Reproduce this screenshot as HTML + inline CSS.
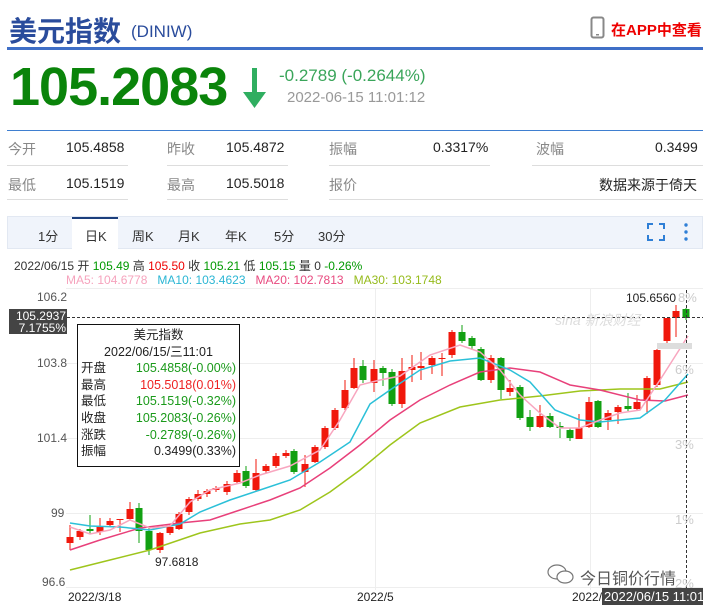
<!DOCTYPE html>
<html><head><meta charset="utf-8"><style>
*{margin:0;padding:0;box-sizing:border-box}
body{width:703px;height:605px;overflow:hidden;background:#fff;font-family:"Liberation Sans","Noto Sans CJK SC",sans-serif;position:relative}
.a{position:absolute;white-space:nowrap}
.lb{color:#888;font-size:14px}
.v{color:#222;font-size:14px}
.ul{position:absolute;height:1px;background:#ddd}
</style></head><body>
<div class="a" style="left:9px;top:10px;font-size:28px;font-weight:bold;color:#2a4c9c">美元指数</div>
<div class="a" style="left:131px;top:22px;font-size:17px;color:#2a4c9c">(DINIW)</div>
<svg class="a" style="left:590px;top:16px" width="16" height="24"><rect x="1.5" y="1.5" width="12" height="20" rx="2" fill="none" stroke="#888" stroke-width="2"/><rect x="6" y="18" width="3" height="1.5" fill="#888"/></svg>
<div class="a" style="left:611px;top:19px;font-size:15px;color:#e00;font-weight:bold">在APP中查看</div>
<div class="a" style="left:7px;top:47px;width:696px;height:3px;background:#3f6fc7"></div>
<div class="a" style="left:10px;top:56px;font-size:54px;font-weight:bold;color:#0a840a;letter-spacing:-1px">105.2083</div>
<svg class="a" style="left:242px;top:68px" width="26" height="42"><rect x="10" y="0" width="5" height="28" fill="#2fae60"/><polygon points="1,24 24,24 12.5,40" fill="#2fae60"/></svg>
<div class="a" style="left:279px;top:66px;font-size:17px;color:#3aa55a">-0.2789 (-0.2644%)</div>
<div class="a" style="left:287px;top:89px;font-size:15px;color:#999">2022-06-15 11:01:12</div>
<div class="a" style="left:7px;top:130px;width:696px;height:1px;background:#3f7fd0"></div>
<div class="a lb" style="left:8px;top:139px">今开</div><div class="a v" style="left:66px;top:139px">105.4858</div>
<div class="a lb" style="left:167px;top:139px">昨收</div><div class="a v" style="left:226px;top:139px">105.4872</div>
<div class="a lb" style="left:329px;top:139px">振幅</div><div class="a v" style="left:433px;top:139px">0.3317%</div>
<div class="a lb" style="left:536px;top:139px">波幅</div><div class="a v" style="left:655px;top:139px">0.3499</div>
<div class="ul" style="left:7px;top:165px;width:121px"></div>
<div class="ul" style="left:167px;top:165px;width:121px"></div>
<div class="ul" style="left:329px;top:165px;width:161px"></div>
<div class="ul" style="left:532px;top:165px;width:171px"></div>
<div class="a lb" style="left:8px;top:175px">最低</div><div class="a v" style="left:66px;top:175px">105.1519</div>
<div class="a lb" style="left:167px;top:175px">最高</div><div class="a v" style="left:226px;top:175px">105.5018</div>
<div class="a lb" style="left:329px;top:175px">报价</div><div class="a v" style="left:599px;top:175px">数据来源于倚天</div>
<div class="ul" style="left:7px;top:199px;width:121px"></div>
<div class="ul" style="left:167px;top:199px;width:121px"></div>
<div class="ul" style="left:329px;top:199px;width:374px"></div>

<div class="a" style="left:7px;top:216px;width:696px;height:33px;background:#f0f4fb;border:1px solid #e2e8f2"></div>
<div class="a" style="left:72px;top:217px;width:46px;height:32px;background:#fff;border-top:2px solid #1c3f7d"></div>
<div class="a" style="top:226px;left:38px;font-size:13px;color:#333">1分</div>
<div class="a" style="top:226px;left:85px;font-size:13px;color:#333">日K</div>
<div class="a" style="top:226px;left:132px;font-size:13px;color:#333">周K</div>
<div class="a" style="top:226px;left:178px;font-size:13px;color:#333">月K</div>
<div class="a" style="top:226px;left:225px;font-size:13px;color:#333">年K</div>
<div class="a" style="top:226px;left:274px;font-size:13px;color:#333">5分</div>
<div class="a" style="top:226px;left:318px;font-size:13px;color:#333">30分</div>
<svg class="a" style="left:647px;top:223px" width="18" height="18" fill="none" stroke="#2f7fd6" stroke-width="2"><path d="M1 6V1h5M12 1h5v5M17 12v5h-5M6 17H1v-5"/></svg>
<svg class="a" style="left:683px;top:222px" width="6" height="20" fill="#2f7fd6"><circle cx="3" cy="3" r="1.7"/><circle cx="3" cy="10" r="1.7"/><circle cx="3" cy="17" r="1.7"/></svg>

<div class="a" style="left:14px;top:257px;font-size:12px;color:#333">2022/06/15 开 <span style="color:#090">105.49</span> 高 <span style="color:#e00">105.50</span> 收 <span style="color:#090">105.21</span> 低 <span style="color:#090">105.15</span> 量 0 <span style="color:#090">-0.26%</span></div>
<div class="a" style="left:66px;top:273px;font-size:12px"><span style="color:#f6a3bd">MA5: 104.6778</span>&nbsp;&nbsp;&nbsp;<span style="color:#2bb6d4">MA10: 103.4623</span>&nbsp;&nbsp;&nbsp;<span style="color:#e84a7f">MA20: 102.7813</span>&nbsp;&nbsp;&nbsp;<span style="color:#96bb1c">MA30: 103.1748</span></div>

<svg class="a" style="left:0;top:0" width="703" height="605">
<g stroke="#eee" stroke-width="1">
<line x1="66" y1="288.5" x2="703" y2="288.5"/>
<line x1="66" y1="363.5" x2="703" y2="363.5"/>
<line x1="66" y1="438.5" x2="703" y2="438.5"/>
<line x1="66" y1="513.5" x2="703" y2="513.5"/>
<line x1="66" y1="587.5" x2="703" y2="587.5"/>
<line x1="375.5" y1="288" x2="375.5" y2="590"/>
<line x1="590.5" y1="288" x2="590.5" y2="590"/>
</g>
<g id="c"></g>
<g fill="none" stroke-width="1.5">
<polyline stroke="#9ec51c" points="70,570 110,560 150,550 200,533 240,524 270,520 300,510 330,492 360,470 390,445 420,423 460,407 500,400 540,396 580,391 620,389 660,389 688,382"/>
<polyline stroke="#e8407a" points="70,550 100,540 140,528 180,523 210,520 240,510 270,500 300,488 330,468 360,445 390,420 420,400 450,385 480,372 510,368 540,372 570,385 600,390 640,400 665,401 688,395"/>
<polyline stroke="#2bc0d8" points="70,523 90,526 120,527 150,530 180,524 200,512 230,500 260,490 290,480 320,462 350,442 370,404 390,390 420,370 450,361 480,358 510,370 530,382 555,410 580,420 600,422 640,418 665,400 688,374"/>
<polyline stroke="#f8a6bf" points="70,527 90,534 110,530 130,520 150,528 170,526 190,502 210,490 240,483 260,475 290,466 320,450 340,420 360,385 380,380 400,376 430,355 460,345 480,352 500,370 520,395 540,413 560,428 580,428 600,420 620,413 640,410 660,380 688,336"/>
</g>
<line x1="67" y1="317.5" x2="703" y2="317.5" stroke="#333" stroke-dasharray="3,2"/>
<line x1="686.5" y1="290" x2="686.5" y2="605" stroke="#333" stroke-dasharray="3,2"/>
<rect x="657" y="343" width="35" height="6" fill="#ddd"/>
<g font-family="Liberation Sans" font-size="12" fill="#555">
<text x="37" y="301">106.2</text><text x="37" y="367">103.8</text><text x="37" y="442">101.4</text><text x="51" y="517">99</text><text x="42" y="586">96.6</text>
<text x="155" y="566" fill="#222">97.6818</text><text x="626" y="302" fill="#222">105.6560</text>
<text x="68" y="601" fill="#222">2022/3/18</text><text x="357" y="601" fill="#222">2022/5</text><text x="572" y="601" fill="#222">2022/</text>
</g>
<g font-family="Liberation Sans" font-size="13" fill="#ccc"><text x="675" y="374">6%</text><text x="675" y="449">3%</text><text x="675" y="524">1%</text><text x="675" y="588">2%</text><text x="678" y="302">8%</text></g>
<text x="555" y="325" font-family="Liberation Sans" font-size="14" font-style="italic" fill="#ddd">sina 新浪财经</text>
</svg>
<div class="a" style="left:9px;top:309px;width:58px;height:25px;background:#444;color:#fff;font-size:12px;line-height:12px;text-align:right;padding:1px 1px 0 0">105.2937<br>7.1755%</div>
<div class="a" style="left:602px;top:588px;width:101px;height:17px;background:#444;color:#fff;font-size:13px;line-height:17px;padding-left:2px">2022/06/15 11:01</div>
<div class="a" style="left:77px;top:324px;width:163px;height:143px;background:#fff;border:1px solid #111;font-size:12.5px;line-height:16.6px;padding:2px 3px 0 3px;color:#222">
<div style="text-align:center">美元指数</div><div style="text-align:center">2022/06/15/三11:01</div>
<div>开盘<span style="float:right;color:#1a9a1a">105.4858(-0.00%)</span></div>
<div>最高<span style="float:right;color:#e22">105.5018(0.01%)</span></div>
<div>最低<span style="float:right;color:#1a9a1a">105.1519(-0.32%)</span></div>
<div>收盘<span style="float:right;color:#1a9a1a">105.2083(-0.26%)</span></div>
<div>涨跌<span style="float:right;color:#1a9a1a">-0.2789(-0.26%)</span></div>
<div>振幅<span style="float:right">0.3499(0.33%)</span></div>
</div>
<svg class="a" style="left:546px;top:563px" width="30" height="22" fill="none" stroke="#777" stroke-width="1.2"><ellipse cx="11" cy="9" rx="9" ry="7"/><ellipse cx="19" cy="14" rx="8" ry="6" fill="#fff"/></svg>
<div class="a" style="left:580px;top:565px;font-size:16px;color:#555">今日铜价行情</div>
<script>
var d=[[70,537,543,525,550,1],[80,531,537,529,540,1],[90,529,531,515,534,0],[100,526,532,518,535,1],[110,521,525,518,527,1],[120,519,520,519,532,1],[130,509,519,502,520,1],[139,508,531,503,543,0],[149,531,550,528,555,0],[160,533,550,532,553,1],[170,527,533,524,535,1],[179,514,529,512,530,1],[189,499,512,497,515,1],[198,494,499,490,501,1],[207,491,494,489,497,1],[216,488,490,486,492,1],[227,484,492,481,495,1],[237,473,482,470,484,1],[246,471,486,466,488,0],[256,473,490,459,492,1],[266,466,471,464,473,1],[276,456,466,453,468,1],[286,453,456,450,458,1],[294,451,472,449,474,0],[305,464,472,455,487,1],[315,447,462,445,463,1],[325,428,447,426,449,1],[335,410,428,408,430,1],[345,390,408,380,410,1],[354,368,388,358,389,1],[363,366,380,360,383,0],[374,369,383,360,392,1],[383,368,373,366,386,0],[392,372,404,369,406,0],[402,371,404,358,408,1],[412,367,370,355,382,1],[421,366,368,352,380,1],[432,358,365,356,374,1],[442,358,359,353,376,1],[452,332,355,330,358,1],[462,332,341,325,343,0],[472,338,346,336,350,0],[481,349,380,347,381,0],[491,358,380,355,383,1],[501,358,390,357,399,0],[510,388,392,380,396,1],[520,387,418,385,420,0],[530,417,427,410,431,0],[540,416,427,405,428,1],[550,416,427,413,428,0],[560,426,428,422,438,0],[570,430,438,428,441,0],[579,428,439,414,439,1],[589,402,427,397,428,1],[598,401,427,400,428,0],[608,413,420,410,430,1],[618,407,412,405,424,1],[628,406,409,393,411,0],[637,402,409,395,410,1],[647,378,401,376,414,1],[657,350,385,349,387,1],[667,318,341,318,343,1],[676,311,318,305,337,1],[686,309,318,308,320,0]];
var g=document.getElementById('c'),s='';
d.forEach(function(c){var col=c[5]?'#f0180c':'#12a012';s+='<line x1="'+c[0]+'" x2="'+c[0]+'" y1="'+c[3]+'" y2="'+c[4]+'" stroke="'+col+'"/><rect x="'+(c[0]-3.5)+'" y="'+c[1]+'" width="7" height="'+Math.max(1,c[2]-c[1])+'" fill="'+col+'"/>';});
g.innerHTML=s;
</script>
</body></html>
